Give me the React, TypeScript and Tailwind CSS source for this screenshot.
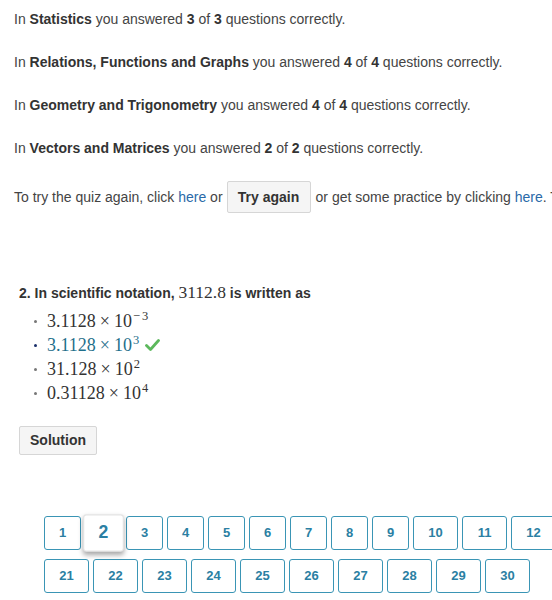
import React from 'react';

const sans = { fontFamily: '"Liberation Sans", Arial, sans-serif' };
const serif = { fontFamily: '"Liberation Serif", "Times New Roman", serif' };

function Results() {
    const rows = [
        { topic: "Statistics", got: 3, total: 3 },
        { topic: "Relations, Functions and Graphs", got: 4, total: 4 },
        { topic: "Geometry and Trigonometry", got: 4, total: 4 },
        { topic: "Vectors and Matrices", got: 2, total: 2 },
    ];
    return (
        <div className="px-[14px] pt-[9px]">
            {rows.map((r) => (
                <p key={r.topic} className="text-[14px] leading-5 mb-[23px] text-[#444] whitespace-nowrap">
                    In <b className="text-[#333]">{r.topic}</b> you answered <b className="text-[#333]">{r.got}</b> of <b className="text-[#333]">{r.total}</b> questions correctly.
                </p>
            ))}
            <div className="flex items-center h-[32px] text-[14px] text-[#444] whitespace-nowrap">
                <span className="shrink-0">To try the quiz again, click <a className="text-[#2a6aa8]">here</a> or</span>
                <button className="shrink-0 ml-[4px] mr-[5px] h-[32px] w-[84px] border border-[#d6d6d6] bg-[#f5f5f5] rounded-[2px] font-bold text-[#333]">
                    Try again
                </button>
                <span className="shrink-0">or get some practice by clicking <a className="text-[#2a6aa8]">here</a>. Then come back.</span>
            </div>
        </div>
    );
}

function Sci({ m, e }: { m: string; e: string }) {
    const neg = e.startsWith("−");
    return (
        <span className="whitespace-nowrap">
            {m}
            <span className="mx-[4px]">×</span>
            10<sup className="text-[12.5px] -top-[7px] ml-[1px]">
                {neg && <span className="mr-[2px]">−</span>}
                {neg ? e.slice(1) : e}
            </sup>
        </span>
    );
}

function Question() {
    const opts = [
        { m: "3.1128", e: "−3", ok: false },
        { m: "3.1128", e: "3", ok: true },
        { m: "31.128", e: "2", ok: false },
        { m: "0.31128", e: "4", ok: false },
    ];
    return (
        <div className="pl-[19px] mt-[69px]">
            <p className="text-[14px] leading-5 font-bold text-[#333] whitespace-nowrap">
                2. In scientific notation, <span className="font-normal text-[17.5px]" style={serif}>3112.8</span> is written as
            </p>
            <ul className="mt-[6px]">
                {opts.map((o, i) => (
                    <li key={i} className="flex items-center h-[24px] pl-[15px]">
                        <span className={`shrink-0 w-[3px] h-[3px] rounded-full ${o.ok ? "bg-[#1a2f6a]" : "bg-[#777]"}`} />
                        <span
                            className={`ml-[10px] text-[18px] leading-6 ${o.ok ? "text-[#1f6f8b]" : "text-[#333]"}`}
                            style={serif}
                        >
                            <Sci m={o.m} e={o.e} />
                        </span>
                        {o.ok && (
                            <svg width="15" height="12" viewBox="0 0 15 12" className="ml-[6px] shrink-0">
                                <path d="M1.5 6.5 L5.5 10.5 L13.5 1.5" fill="none" stroke="#5cb85c" strokeWidth="2.8" strokeLinecap="round" strokeLinejoin="round" />
                            </svg>
                        )}
                    </li>
                ))}
            </ul>
            <button className="mt-[21px] h-[29px] w-[78px] border border-[#d6d6d6] bg-[#f5f5f5] rounded-[2px] text-[14px] font-bold text-[#333]">
                Solution
            </button>
        </div>
    );
}

function Pager() {
    const row1 = Array.from({ length: 20 }, (_, i) => i + 1);
    const row2 = Array.from({ length: 10 }, (_, i) => i + 21);
    const box = (n: number) => {
        const wide = n >= 10;
        if (n === 2) {
            return (
                <div key={n} className="w-[37px] h-[34px] shrink-0 flex items-center justify-center bg-white rounded-[3px] border border-[#e4e4e4] scale-110 shadow-[0_3px_5px_rgba(0,0,0,0.35)] text-[16px] font-bold text-[#2b7fa3]">
                    {n}
                </div>
            );
        }
        return (
            <div key={n} className={`${wide ? "w-[45px]" : "w-[37px]"} h-[34px] shrink-0 flex items-center justify-center rounded-[3px] border border-[#3a95b5] text-[13px] font-bold text-[#2b7fa3]`}>
                {n}
            </div>
        );
    };
    return (
        <div className="pl-[44px] mt-[61px] flex flex-col gap-[9px]">
            <div className="flex gap-[4px]">{row1.map(box)}</div>
            <div className="flex gap-[4px]">{row2.map(box)}</div>
        </div>
    );
}

export default function App() {
    return (
        <div className="w-[552px] h-[600px] overflow-hidden bg-white" style={sans}>
            <Results />
            <Question />
            <Pager />
        </div>
    );
}
